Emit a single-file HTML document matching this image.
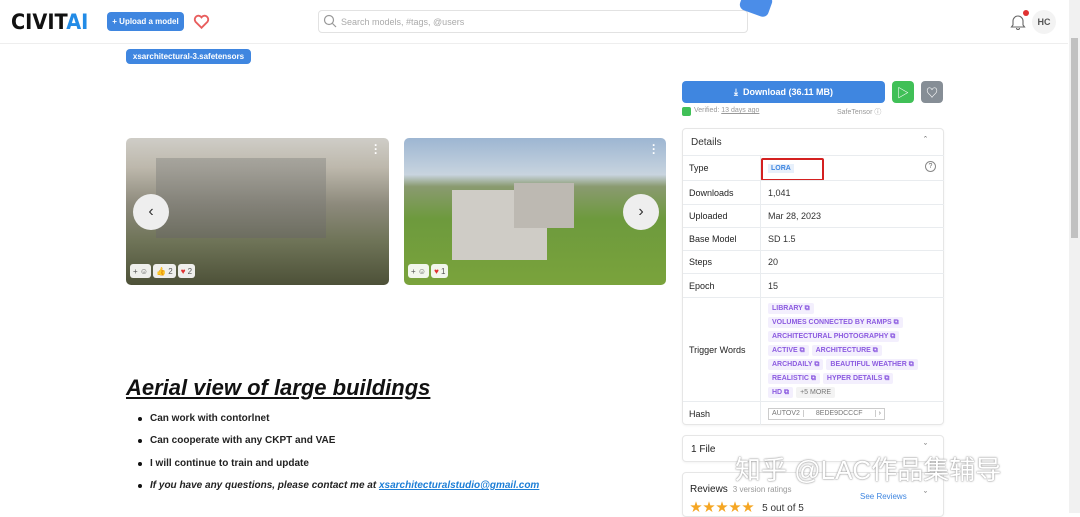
<!DOCTYPE html>
<html><head><meta charset="utf-8"><style>
*{box-sizing:border-box;margin:0;padding:0}
body{width:1080px;height:513px;overflow:hidden;background:#fff;font-family:"Liberation Sans","Noto Sans CJK SC",sans-serif;color:#222;position:relative}
.a{position:absolute}
.hdr{left:0;top:0;width:1068px;height:44px;border-bottom:1px solid #eee}
.btn{border-radius:4px;color:#fff;font-size:9px;font-weight:bold;display:flex;align-items:center;justify-content:center;white-space:nowrap}
.card{border:1px solid #e6e6e6;border-radius:4px;background:#fff;box-shadow:0 1px 2px rgba(0,0,0,.05)}
.row{position:absolute;left:0;width:261px;border-top:1px solid #e9ecef;font-size:9px;display:flex}
.row .l{width:78px;padding-left:6px;border-right:1px solid #e9ecef;display:flex;align-items:center;color:#222}
.row .v{padding-left:7px;display:flex;align-items:center;color:#333}
.tl{height:14px;white-space:nowrap}
.tw{display:inline-block;background:#f3effd;color:#8c5be0;font-size:7px;font-weight:bold;padding:0 4px;margin-right:3px;border-radius:2px;line-height:11px}
li{list-style:none;position:absolute;left:138px;font-size:10px;font-weight:bold}
li:before{content:"";position:absolute;left:0;top:4px;width:4px;height:4px;border-radius:50%;background:#111}
li span{margin-left:12px}
.rx{background:rgba(255,255,255,.9);border-radius:3px;height:14px;font-size:8px;display:flex;align-items:center;padding:0 3px;color:#555}
</style></head><body>
<div class="a hdr"></div>
<div class="a" style="left:11px;top:10px;font-size:21px;font-weight:900;letter-spacing:0px;font-family:'DejaVu Sans',sans-serif;line-height:24px;transform:scaleX(0.92);transform-origin:left"><span style="color:#111">CIVIT</span><span style="color:#228be6">AI</span></div>
<div class="a btn" style="left:107px;top:12px;width:77px;height:19px;background:#3f86e0;font-size:8px">+ Upload a model</div>
<svg class="a" style="left:192px;top:12px" width="19" height="18" viewBox="0 0 24 24"><path d="M12 21l-8-8a5 5 0 0 1 8-6 5 5 0 0 1 8 6z" fill="none" stroke="#e85d5d" stroke-width="2.5"/></svg>
<div class="a" style="left:318px;top:10px;width:430px;height:23px;border:1px solid #e2e2e2;border-radius:4px"></div>
<svg class="a" style="left:323px;top:14px" width="14" height="14" viewBox="0 0 14 14"><circle cx="6" cy="6" r="4.5" fill="none" stroke="#999" stroke-width="1.2"/><path d="M9.5 9.5l3.5 3.5" stroke="#999" stroke-width="1.2"/></svg>
<div class="a" style="left:341px;top:17px;font-size:9px;color:#aaa">Search models, #tags, @users</div>
<div class="a" style="left:741px;top:-8px;width:30px;height:22px;background:#4b8de8;border-radius:6px;transform:rotate(20deg)"></div>
<svg class="a" style="left:1010px;top:13px" width="16" height="17" viewBox="0 0 16 17"><path d="M3 12V8a5 5 0 0 1 10 0v4l1.5 2h-13z M6.5 15a1.5 1.5 0 0 0 3 0" fill="none" stroke="#666" stroke-width="1.1"/></svg>
<div class="a" style="left:1023px;top:10px;width:6px;height:6px;border-radius:50%;background:#e03131"></div>
<div class="a" style="left:1032px;top:10px;width:24px;height:24px;border-radius:50%;background:#f3f3f3;font-size:9px;font-weight:bold;color:#555;display:flex;align-items:center;justify-content:center">HC</div>
<div class="a" style="left:1069px;top:0;width:11px;height:513px;background:#f1f1f1"></div>
<div class="a" style="left:1071px;top:38px;width:7px;height:200px;background:#c1c1c1"></div>
<div class="a btn" style="left:126px;top:49px;width:125px;height:15px;background:#3f86e0;font-size:8px">xsarchitectural-3.safetensors</div>

<div class="a" style="left:126px;top:138px;width:263px;height:147px;border-radius:5px;overflow:hidden;background:linear-gradient(180deg,#cfcdc7 0%,#bdb8ac 20%,#8d8a7c 45%,#6f7458 70%,#4d5138 100%)">
 <div class="a" style="left:30px;top:20px;width:170px;height:80px;background:linear-gradient(#9a9993,#6b6a62);opacity:.7"></div>
</div>
<div class="a" style="left:404px;top:138px;width:262px;height:147px;border-radius:5px;overflow:hidden;background:linear-gradient(180deg,#9db6d2 0%,#c8d4df 25%,#8a9a70 33%,#6d9a3d 55%,#7aa33c 100%)">
 <div class="a" style="left:48px;top:52px;width:95px;height:70px;background:#cfccc6"></div>
 <div class="a" style="left:110px;top:45px;width:60px;height:45px;background:#bdb9b2"></div>
</div>
<div class="a" style="left:374px;top:143px;color:#fff;font-size:12px;font-weight:bold;line-height:4px">·<br>·<br>·</div>
<div class="a" style="left:652px;top:143px;color:#fff;font-size:12px;font-weight:bold;line-height:4px">·<br>·<br>·</div>
<div class="a" style="left:133px;top:194px;width:36px;height:36px;border-radius:50%;background:#eeeeee;display:flex;align-items:center;justify-content:center;font-size:16px;color:#333">‹</div>
<div class="a" style="left:623px;top:194px;width:36px;height:36px;border-radius:50%;background:#eeeeee;display:flex;align-items:center;justify-content:center;font-size:16px;color:#333">›</div>
<div class="a" style="left:130px;top:264px;display:flex;gap:2px"><div class="rx">+ ☺</div><div class="rx">👍 2</div><div class="rx"><span style="color:#e03131">♥</span>&nbsp;2</div></div>
<div class="a" style="left:408px;top:264px;display:flex;gap:2px"><div class="rx">+ ☺</div><div class="rx"><span style="color:#e03131">♥</span>&nbsp;1</div></div>

<div class="a" style="left:126px;top:375px;font-size:22px;font-weight:bold;font-style:italic;text-decoration:underline;color:#111;white-space:nowrap">Aerial view of large buildings</div>
<ul>
<li style="top:413px"><span>Can work with contorlnet</span></li>
<li style="top:435px"><span>Can cooperate with any CKPT and VAE</span></li>
<li style="top:458px"><span>I will continue to train and update</span></li>
<li style="top:480px;font-style:italic"><span>If you have any questions, please contact me at <u style="color:#1c7ed6">xsarchitecturalstudio@gmail.com</u></span></li>
</ul>

<div class="a btn" style="left:682px;top:81px;width:203px;height:22px;background:#3f86e0;font-size:9px">⤓&nbsp;&nbsp;Download (36.11 MB)</div>
<div class="a btn" style="left:892px;top:81px;width:22px;height:22px;background:#40c057;font-size:12px">▷</div>
<div class="a btn" style="left:921px;top:81px;width:22px;height:22px;background:#868e96;font-size:12px">♡</div>
<div class="a" style="left:682px;top:107px;width:9px;height:9px;background:#40c057;border-radius:2px"></div>
<div class="a" style="left:694px;top:107px;font-size:7px;color:#999">Verified: <u>13 days ago</u></div>
<div class="a" style="left:837px;top:107px;font-size:7px;color:#999">SafeTensor ⓘ</div>

<div class="a card" style="left:682px;top:128px;width:262px;height:297px">
 <div class="a" style="left:8px;top:8px;font-size:10px;color:#333">Details</div>
 <div class="a" style="left:241px;top:6px;font-size:9px;color:#555">ˆ</div>
 <div class="row" style="top:26px;height:25px"><div class="l">Type</div><div class="v"><span style="background:#e7f0fb;color:#3f86e0;font-size:7px;font-weight:bold;padding:1px 3px">LORA</span></div></div>
 <div class="a" style="left:78px;top:29px;width:63px;height:23px;border:2px solid #d42020;border-radius:2px"></div>
 <div class="a" style="left:242px;top:32px;width:11px;height:11px;border:1px solid #888;border-radius:50%;font-size:7px;text-align:center;line-height:9px;color:#666">?</div>
 <div class="row" style="top:51px;height:24px"><div class="l">Downloads</div><div class="v">1,041</div></div>
 <div class="row" style="top:75px;height:23px"><div class="l">Uploaded</div><div class="v">Mar 28, 2023</div></div>
 <div class="row" style="top:98px;height:23px"><div class="l">Base Model</div><div class="v">SD 1.5</div></div>
 <div class="row" style="top:121px;height:23px"><div class="l">Steps</div><div class="v">20</div></div>
 <div class="row" style="top:144px;height:24px"><div class="l">Epoch</div><div class="v">15</div></div>
 <div class="row" style="top:168px;height:104px"><div class="l">Trigger Words</div><div class="v" style="display:block;padding-top:4px;width:180px">
  <div class="tl"><span class="tw">LIBRARY ⧉</span></div><div class="tl"><span class="tw">VOLUMES CONNECTED BY RAMPS ⧉</span></div><div class="tl"><span class="tw">ARCHITECTURAL PHOTOGRAPHY ⧉</span></div><div class="tl"><span class="tw">ACTIVE ⧉</span><span class="tw">ARCHITECTURE ⧉</span></div><div class="tl"><span class="tw">ARCHDAILY ⧉</span><span class="tw">BEAUTIFUL WEATHER ⧉</span></div><div class="tl"><span class="tw">REALISTIC ⧉</span><span class="tw">HYPER DETAILS ⧉</span></div><div class="tl"><span class="tw">HD ⧉</span><span class="tw" style="background:#f3f3f3;color:#777;font-weight:normal">+5 MORE</span></div></div></div>
 <div class="row" style="top:272px;height:24px"><div class="l">Hash</div><div class="v"><span style="border:1px solid #ccc;font-size:7px;color:#777;display:flex;height:12px;align-items:center"><span style="padding:0 3px;border-right:1px solid #ccc">AUTOV2</span><span style="padding:0 12px;border-right:1px solid #ccc">8EDE9DCCCF</span><span style="padding:0 3px">›</span></span></div></div>
</div>
<div class="a card" style="left:682px;top:435px;width:262px;height:27px"><div class="a" style="left:8px;top:8px;font-size:10px">1 File</div><div class="a" style="left:241px;top:6px;font-size:9px;color:#555">ˇ</div></div>
<div class="a card" style="left:682px;top:472px;width:262px;height:45px">
 <div class="a" style="left:7px;top:11px;font-size:10px">Reviews <span style="font-size:8px;color:#999">&nbsp;3 version ratings</span></div>
 <div class="a" style="left:177px;top:19px;font-size:8px;color:#3f86e0">See Reviews</div>
 <div class="a" style="left:241px;top:17px;font-size:9px;color:#555">ˇ</div>
 <div class="a" style="left:7px;top:25px;font-size:12px;color:#f5a623;letter-spacing:1px">★★★★★ <span style="font-size:10px;color:#333;letter-spacing:0">&nbsp;5 out of 5</span></div>
</div>
<div class="a" style="left:735px;top:450px;font-size:26px;color:#fff;text-shadow:0 0 2px #999,0 0 1px #888;white-space:nowrap">知乎 @LAC作品集辅导</div>
</body></html>
